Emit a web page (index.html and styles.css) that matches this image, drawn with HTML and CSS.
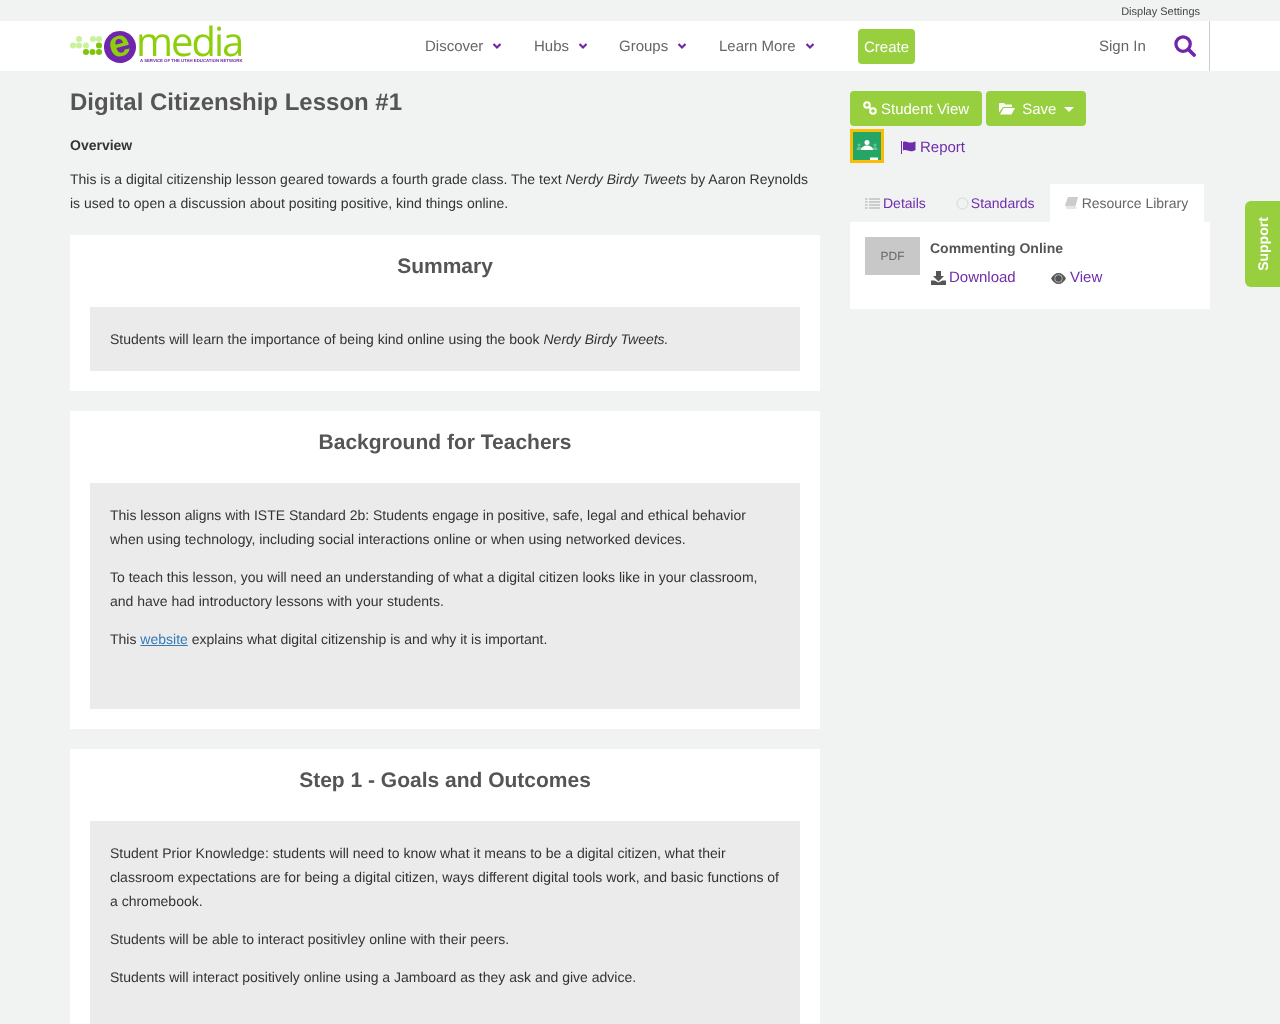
FILE: index.html
```html
<!doctype html>
<html lang="en">
  <head>
    <meta charset="UTF-8" />
    <meta name="viewport" content="width=device-width, initial-scale=1.0" />
    <title>Digital Citizenship Lesson #1</title>
    <link rel="stylesheet" href="styles.css">
  </head>
  <body>
    <div class="page-wrap">
      <div class="top-bar">
        <a class="display-settings">Display Settings</a>
      </div>

      <header class="site-nav">
        <div class="nav-inner">
          <a class="logo">
            <svg class="logo-dots" width="34" height="26" viewBox="0 0 34 26">
              <g fill="#c9f29a">
                <circle cx="9" cy="6" r="3" />
                <circle cx="23" cy="6" r="3" />
                <circle cx="29" cy="6" r="3" />
                <circle cx="3" cy="12.500" r="3" />
                <circle cx="9" cy="12.500" r="3" />
                <circle cx="16" cy="12.500" r="3" />
              </g>
              <g fill="#7ec40a">
                <circle cx="29" cy="12.500" r="3" />
                <circle cx="16" cy="19" r="3" />
                <circle cx="22.500" cy="19" r="3" />
                <circle cx="29" cy="19" r="3" />
              </g>
            </svg>
            <span class="logo-e">e</span>
            <span class="logo-media">media</span>
            <span class="logo-tag">A SERVICE OF THE UTAH EDUCATION NETWORK</span>
          </a>

          <nav class="nav-links">
            <a class="nav-link discover">Discover <svg class="chev" viewBox="0 0 10 8"><path d="M1.500 2 5 5.500 8.500 2" /></svg></a>
            <a class="nav-link hubs">Hubs <svg class="chev" viewBox="0 0 10 8"><path d="M1.500 2 5 5.500 8.500 2" /></svg></a>
            <a class="nav-link groups">Groups <svg class="chev" viewBox="0 0 10 8"><path d="M1.500 2 5 5.500 8.500 2" /></svg></a>
            <a class="nav-link learn">Learn More <svg class="chev" viewBox="0 0 10 8"><path d="M1.500 2 5 5.500 8.500 2" /></svg></a>
          </nav>

          <a class="create-btn">Create</a>
          <a class="sign-in">Sign In</a>
          <div class="search-box">
            <svg width="22" height="22" viewBox="0 0 23 23"><circle cx="9.500" cy="9.500" r="7.500" fill="none" stroke="#6f26ad" stroke-width="3.400" /><path d="M15 15l6 6" stroke="#6f26ad" stroke-width="3.800" stroke-linecap="round" /></svg>
          </div>
        </div>
      </header>

      <main class="page">
        <div class="lesson">
          <h1 class="lesson-title">Digital Citizenship Lesson #1</h1>
          <p class="overview-label">Overview</p>
          <p class="overview-text">This is a digital citizenship lesson geared towards a fourth grade class. The text <em>Nerdy Birdy Tweets</em> by Aaron Reynolds is used to open a discussion about positing positive, kind things online.</p>

          <section class="card">
            <h2 class="card-title">Summary</h2>
            <div class="card-body">
              <p>Students will learn the importance of being kind online using the book <em>Nerdy Birdy Tweets.</em></p>
            </div>
          </section>

          <section class="card">
            <h2 class="card-title">Background for Teachers</h2>
            <div class="card-body tall">
              <p>This lesson aligns with ISTE Standard 2b: Students engage in positive, safe, legal and ethical behavior when using technology, including social interactions online or when using networked devices.</p>
              <p>To teach this lesson, you will need an understanding of what a digital citizen looks like in your classroom, and have had introductory lessons with your students.</p>
              <p>This <a class="text-link">website</a> explains what digital citizenship is and why it is important.</p>
            </div>
          </section>

          <section class="card">
            <h2 class="card-title">Step 1 - Goals and Outcomes</h2>
            <div class="card-body tall">
              <p>Student Prior Knowledge: students will need to know what it means to be a digital citizen, what their classroom expectations are for being a digital citizen, ways different digital tools work, and basic functions of a chromebook.</p>
              <p>Students will be able to interact positivley online with their peers.</p>
              <p>Students will interact positively online using a Jamboard as they ask and give advice.</p>
            </div>
          </section>
        </div>

        <aside class="sidebar">
          <div class="action-row">
            <a class="btn">
              <svg class="ico link-ico" width="14" height="14" viewBox="0 0 14 14"><g fill="none" stroke="#fff" stroke-width="2"><circle cx="4" cy="4" r="2.800" /><circle cx="10" cy="10" r="2.800" /><path d="M6 6l2 2" /></g></svg>
              Student View
            </a>
            <a class="btn save">
              <svg class="ico folder-ico" width="16" height="13" viewBox="0 0 16 13"><path fill="#fff" d="M0 2a1 1 0 0 1 1-1h4l1.500 1.500H12a1 1 0 0 1 1 1V5H4L0 10.500zM4.500 6H16l-3.500 6.500H1z" /></svg>
              <span class="save-text">Save</span>
              <span class="caret"></span>
            </a>
          </div>

          <div class="share-row">
            <a class="classroom-btn">
              <svg width="28" height="28" viewBox="0 0 28 28">
                <rect width="28" height="28" fill="#25a667" />
                <rect x="17" y="25.500" width="8" height="2.500" fill="#fff" />
                <circle cx="6" cy="13" r="1.500" fill="#6cc397" />
                <circle cx="22" cy="13" r="1.500" fill="#6cc397" />
                <path fill="#6cc397" d="M3.500 18c0-2 1-3 2.500-3s3 1 3 3zM19 18c0-2 1.500-3 3-3s2.500 1 2.500 3z" />
                <circle cx="14" cy="10.500" r="2.500" fill="#fff" />
                <path fill="#fff" d="M8 18c0-3 3-4.500 6-4.500s6 1.500 6 4.500z" />
              </svg>
            </a>
            <a class="report">
              <svg width="15" height="13" viewBox="0 0 15 13"><path fill="#6f2dab" d="M0 0h1v13H0zM2 1c3-1.500 5 1 8 .5 2 0 3.500-.7 4.500-1V9c-1.500 1-3 1.300-4.500 1.300-3 0-5-2-8-.8z" /></svg>
              Report
            </a>
          </div>

          <div class="tabs">
            <a class="tab details">
              <svg class="ico" width="15" height="11" viewBox="0 0 15 11"><path fill="#ccc" d="M0 0h2.500v2H0zM4 0h11v2H4zM0 3h2.500v2H0zM4 3h11v2H4zM0 6h2.500v2H0zM4 6h11v2H4zM0 9h2.500v2H0zM4 9h11v2H4z" /></svg>
              Details
            </a>
            <a class="tab standards">
              <svg class="ico" width="13" height="13" viewBox="0 0 13 13"><circle cx="6.500" cy="6.500" r="5.500" fill="none" stroke="#d4d4d4" /></svg>
              Standards
            </a>
            <a class="tab active">
              <svg class="ico" width="13" height="12" viewBox="0 0 13 12"><path fill="#ccc" d="M3 0h10l-2.500 9.500H1.500C.5 9.500 0 8.500 .3 7.500z" /><path fill="#ccc" d="M1 10.500h10.500v1H1z" /></svg>
              Resource Library
            </a>
          </div>

          <div class="resource-panel">
            <div class="file-badge">PDF</div>
            <div class="file-info">
              <div class="file-name">Commenting Online</div>
              <div class="file-links">
                <a class="file-link download">
                  <svg width="15" height="14" viewBox="0 0 15 14"><path fill="#555" d="M5 0h5v5h3L7.500 10.500 2 5h3zM0 9.500h3.500l4 2 4-2H15V14H0z" /></svg>
                  Download
                </a>
                <a class="file-link">
                  <svg width="15" height="11" viewBox="0 0 15 11"><path fill="#555" d="M0 5.500C2 2 4.500 0 7.500 0S13 2 15 5.500C13 9 10.500 11 7.500 11S2 9 0 5.500z" /><circle cx="7.500" cy="5.500" r="3.800" fill="none" stroke="#ddd" stroke-width=".7" /></svg>
                  View
                </a>
              </div>
            </div>
          </div>
        </aside>
      </main>

      <a class="support-tab"><span>Support</span></a>
    </div>
  </body>
</html>
```

FILE: styles.css
```css
* {
  margin: 0;
  padding: 0;
  box-sizing: border-box;
}

html,
body {
  height: 1024px;
  overflow: hidden;
}

body {
  font-family: 'Liberation Sans', Arial, sans-serif;
  font-size: 14px;
  line-height: 24px;
  color: #333;
  background: #f1f3f2;
  text-rendering: geometricPrecision;
}

.page-wrap {
  will-change: transform;
}

.top-bar {
  height: 21px;
  padding: 3px 80px 0 0;
  display: flex;
  justify-content: flex-end;
  align-items: center;
}

.display-settings {
  font-size: 11px;
  line-height: 18px;
  color: #444;
}

.site-nav {
  height: 50px;
  background: white;
}

.nav-inner {
  width: 1140px;
  height: 100%;
  margin-left: 70px;
  display: flex;
  align-items: center;
}

.logo {
  width: 172px;
  height: 100%;
  display: flex;
  align-items: center;
  position: relative;
}

.logo-dots {
  flex: none;
}

.logo-e {
  flex: none;
  width: 32px;
  height: 32px;
  margin-top: 1px;
  border-radius: 50%;
  background: #6f26ad;
  color: #8dcf0b;
  font-size: 38px;
  font-weight: 700;
  line-height: 27px;
  text-align: center;
  transform: rotate(-15deg);
}

.logo-media {
  position: absolute;
  left: 66px;
  top: 4px;
  font-family: 'Open Sans', sans-serif;
  font-size: 40px;
  font-weight: 500;
  line-height: 32px;
  letter-spacing: -2px;
  color: #8dcf0b;
}

.logo-tag {
  position: absolute;
  left: 70px;
  top: 38px;
  font-size: 4.300px;
  font-weight: 700;
  line-height: 3px;
  white-space: nowrap;
  color: #6f26ad;
}

.nav-links {
  display: flex;
  margin-left: 183px;
  padding-top: 1px;
}

.nav-link {
  font-size: 15px;
  color: #666;
  display: flex;
  align-items: center;
  white-space: nowrap;
}

.chev {
  width: 10px;
  height: 8px;
  margin-left: 9px;
  margin-top: -1px;
  fill: none;
  stroke: #6f26ad;
  stroke-width: 2.200;
}

.discover {
  width: 109px;
}

.hubs {
  width: 85px;
}

.groups {
  width: 100px;
}

.learn {
  width: 139px;
}

.create-btn {
  height: 35px;
  padding: 2px 6px 0;
  margin-top: 1px;
  border-radius: 4px;
  background: #97cf3e;
  color: white;
  font-size: 15px;
  line-height: 33px;
}

.sign-in {
  margin-left: 184px;
  padding-top: 1px;
  font-size: 15px;
  color: #666;
}

.search-box {
  margin-left: auto;
  width: 36px;
  height: 100%;
  padding-bottom: 1px;
  border-right: 1px solid #ccc;
  display: flex;
  align-items: center;
}

.page {
  width: 1140px;
  margin-left: 70px;
  display: flex;
  gap: 30px;
}

.lesson {
  width: 750px;
}

.lesson-title {
  font-size: 24px;
  line-height: 30px;
  color: #555;
  margin-top: 17px;
  margin-bottom: 15px;
}

.overview-label {
  font-weight: 700;
  margin-bottom: 10px;
}

.overview-text {
  margin-bottom: 20px;
}

.card {
  background: white;
  padding: 20px;
  margin-bottom: 20px;
}

.card-title {
  font-size: 21px;
  line-height: 24px;
  text-align: center;
  color: #555;
  margin-bottom: 28px;
}

.card-body {
  background: #ebebeb;
  padding: 20px;
}

.card-body p {
  margin-bottom: 14px;
}

.card-body p:last-child {
  margin-bottom: 0;
}

.card-body.tall {
  padding-bottom: 58px;
}

.text-link {
  color: #337ab7;
  text-decoration: underline;
}

.sidebar {
  width: 360px;
  padding-top: 20px;
}

.action-row {
  display: flex;
  gap: 4px;
}

.btn {
  height: 35px;
  padding: 2px 13px 0;
  border-radius: 4px;
  background: #97cf3e;
  color: white;
  font-size: 15px;
  line-height: 33px;
  display: flex;
  align-items: center;
  gap: 4px;
}

.link-ico {
  margin-top: -4px;
}

.folder-ico {
  margin-top: -2px;
}

.save {
  padding-right: 12px;
}

.save-text {
  margin-left: 3px;
}

.caret {
  margin-left: 4px;
  border-top: 5px solid white;
  border-left: 5px solid transparent;
  border-right: 5px solid transparent;
}

.share-row {
  margin-top: 3px;
  height: 34px;
  display: flex;
  align-items: center;
}

.classroom-btn {
  width: 34px;
  height: 34px;
  border: 3px solid #fbbc04;
  display: block;
}

.classroom-btn svg {
  display: block;
}

.report {
  margin-left: 17px;
  margin-top: 4px;
  font-size: 15px;
  color: #6f2dab;
  display: flex;
  align-items: center;
  gap: 4px;
}

.report svg {
  margin-top: -2px;
}

.tabs {
  margin-top: 21px;
  display: flex;
}

.tab {
  height: 38px;
  padding: 0 15px;
  color: #6f2dab;
  line-height: 38px;
  display: flex;
  align-items: center;
  gap: 3px;
}

.tab.active {
  padding-right: 16px;
  gap: 4px;
  background: white;
  color: #666;
}

.standards .ico {
  margin-right: -1px;
}

.resource-panel {
  background: white;
  height: 87px;
  padding: 15px;
  display: flex;
}

.file-badge {
  width: 55px;
  height: 38px;
  background: #c8c8c8;
  color: #666;
  font-size: 12px;
  line-height: 38px;
  text-align: center;
}

.file-info {
  margin-left: 10px;
}

.file-name {
  font-weight: 700;
  color: #555;
  line-height: 22px;
}

.file-links {
  margin-top: 7px;
  display: flex;
}

.file-link {
  font-size: 15px;
  color: #6f2dab;
  display: flex;
  align-items: center;
  gap: 4px;
}

.download {
  width: 121px;
  padding-left: 1px;
  gap: 3px;
}

.support-tab {
  position: absolute;
  right: 0;
  top: 201px;
  width: 35px;
  height: 86px;
  background: #97cf3e;
  border-radius: 6px 0 0 6px;
  display: flex;
  align-items: center;
  justify-content: center;
}

.support-tab span {
  transform: rotate(-90deg);
  color: white;
  font-size: 14px;
  font-weight: 700;
}
```
